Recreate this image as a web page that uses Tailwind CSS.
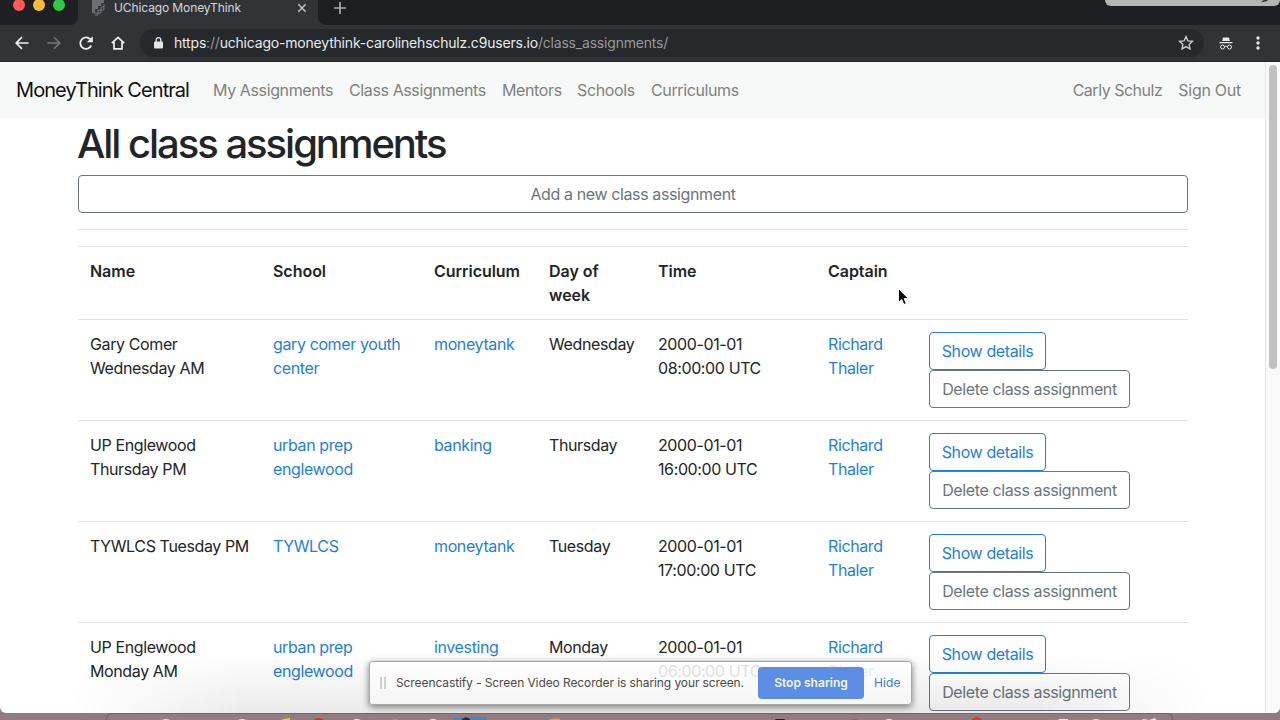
<!DOCTYPE html>
<html lang="en">
<head>
<meta charset="UTF-8">
<meta name="viewport" content="width=device-width,initial-scale=1">
<title>UChicago MoneyThink</title>
<script src="https://cdn.jsdelivr.net/npm/@tailwindcss/browser@4"></script>
</head>

<body class="relative w-[1280px] h-[720px] overflow-hidden bg-[#937a80] font-['Inter','Liberation_Sans',sans-serif] text-base text-[#212529]">

<!-- dock -->
<div class="absolute left-[106px] top-[713px] w-[1067px] h-[20px] rounded-t-md border border-b-0 border-[#75646a] bg-[#967c82]">
  <svg class="block w-[1066px] h-[8px] -mt-px" viewBox="107 713 1066 8">
    <g fill="#eee6e8">
      <circle cx="166" cy="727" r="8"/><circle cx="242" cy="727" r="8"/><circle cx="357" cy="727" r="8"/><circle cx="433" cy="727" r="8"/>
      <circle cx="889" cy="727" r="8"/><circle cx="1096" cy="727" r="8"/><path d="M1057 721l2-2h9v2zM1141 721l2-2 6 1 6-2 2 3z"/>
    </g>
    <path d="M279 721q6-3 11-3v3z" fill="#e8c947"/>
    <circle cx="319" cy="726" r="8" fill="#c23a32"/>
    <circle cx="395" cy="727" r="8" fill="#86b453"/>
    <rect x="453" y="717" width="34" height="5" rx="2" fill="#4a86b8"/>
    <path d="M462 719l4-2 4 2v2h-8z" fill="#1d3145"/>
    <path d="M546 721q8-4 14-2v2z" fill="#dba346"/>
    <path d="M773 721l3-2h9l-1 2z" fill="#222"/>
    <circle cx="855" cy="726" r="7" fill="#c64748"/>
    <circle cx="977" cy="723" r="6" fill="#d23b3a"/>
  </svg>
</div>

<!-- browser window -->
<div class="relative flex flex-col h-[713px] overflow-hidden rounded-b-md bg-white">

  <!-- tab strip -->
  <div class="flex h-[25px] shrink-0 bg-[#1e1f23]">
    <div class="w-[78px] bg-[#303437]">
      <div class="flex h-full gap-2 rounded-br-lg bg-[#1e1f23] pl-[13px]">
        <i class="size-3 -mt-px rounded-full bg-[#fc5b57]"></i>
        <i class="size-3 -mt-px rounded-full bg-[#fdbc40]"></i>
        <i class="size-3 -mt-px rounded-full bg-[#34c84a]"></i>
      </div>
    </div>
    <div class="flex w-[240px] bg-[#303437] pl-[14px]">
      <svg class="w-[13px] h-[16px]" viewBox="0 0 13 16"><path d="M0 0h12v3H9v3H6v3H3v4H0z" fill="#6d7073"/><path d="M12 4v3H9v3H6v3H2M12 7v3H9v3H6v2H3" fill="none" stroke="#7b7e81" stroke-width=".9"/></svg>
      <span class="ml-[9px] w-[170px] text-xs leading-4 tracking-[-0.009em] text-[#d4d6d8]">UChicago MoneyThink</span>
      <svg class="mt-[3px] ml-[13px] size-[10px]" viewBox="0 0 10 10"><path d="M1.300 1.300l7.400 7.400M8.700 1.300L1.300 8.700" stroke="#bfc2c4" stroke-width="1.500"/></svg>
    </div>
    <div class="w-[962px] bg-[#303437]">
      <div class="flex h-full justify-between rounded-bl-lg bg-[#1e1f23]">
        <svg class="ml-4 mt-[2px] size-3" viewBox="0 0 12 12"><path d="M6 0v12M0 6h12" stroke="#a9abae" stroke-width="1.700"/></svg>
        <div class="flex justify-end w-[175px] h-[6px] rounded-b-md bg-[#b5b5b5] pr-[11px]"><svg class="w-2 h-[3px]" viewBox="0 0 8 3"><path d="M0 2q5 0 7-2H3z" fill="#333"/></svg></div>
      </div>
    </div>
  </div>

  <!-- toolbar -->
  <div class="flex h-[37px] shrink-0 items-center border-b border-[#242629] bg-[#303437] pl-[15px]">
    <svg class="size-[14px]" viewBox="0 0 14 14" fill="none" stroke="#eef0f1" stroke-width="1.700"><path d="M13.500 7H1.500M7 1.200L1.200 7 7 12.800"/></svg>
    <svg class="ml-[18px] size-[14px]" viewBox="0 0 14 14" fill="none" stroke="#74787b" stroke-width="1.600"><path d="M.500 7h12M7 1.200L12.800 7 7 12.800"/></svg>
    <svg class="ml-[18px] size-[14px]" viewBox="0 0 14 14"><path d="M12.200 9.500A5.700 5.700 0 1 1 11.200 3.200" fill="none" stroke="#eef0f1" stroke-width="1.800"/><path d="M13.800.300v6H7.800z" fill="#eef0f1"/></svg>
    <svg class="ml-[18px] size-[14px]" viewBox="0 0 14 14" fill="none" stroke="#eef0f1" stroke-width="1.700"><path d="M.800 7.200L7 1.300l6.200 5.900M3 6v6.900h8V6"/></svg>
    <div class="flex w-[1064px] h-7 items-center ml-[15px] rounded-full bg-[#25292b] pl-[14px]">
      <svg class="w-[9px] h-[12px]" viewBox="0 0 9 12"><rect y="4.500" width="9" height="7" rx="1" fill="#e3e5e6"/><path d="M2.200 5V3a2.300 2.300 0 0 1 4.600 0v2" fill="none" stroke="#e3e5e6" stroke-width="1.300"/></svg>
      <span class="ml-[11px] w-[1008px] whitespace-nowrap text-sm tracking-[-0.014em] text-[#e8eaeb]">https<span class="text-[#969a9d]">://</span>uchicago-moneythink-carolinehschulz.c9users.io<span class="text-[#969a9d]">/class_assignments/</span></span>
      <svg class="-ml-[4px] size-4 shrink-0" viewBox="0 0 16 16"><path d="M8 1.600l1.900 4.200 4.600.500-3.400 3.100.900 4.500L8 11.600l-4 2.300.900-4.500L1.500 6.300l4.600-.500z" fill="none" stroke="#cfd2d4" stroke-width="1.300"/></svg>
    </div>
    <svg class="ml-[15px] w-[14px] h-[13px]" viewBox="0 0 14 13"><path d="M4 0.500h6l.800 3.500H3.200zM.500 5h13v1.300H.500z" fill="#e8eaeb"/><g fill="none" stroke="#e8eaeb"><circle cx="3.500" cy="10" r="2"/><circle cx="10.500" cy="10" r="2"/><path d="M5.500 9.600q1.500-1 3 0"/></g></svg>
    <svg class="ml-[23px] w-[4px] h-[14px]" viewBox="0 0 4 14" fill="#e8eaeb"><circle cx="2" cy="2" r="1.700"/><circle cx="2" cy="7" r="1.700"/><circle cx="2" cy="12" r="1.700"/></svg>
  </div>

  <div class="flex h-[651px]">
    <main class="w-[1265px]">
      <nav class="flex h-14 items-center bg-[#f7f9f8] pl-4 pr-6 text-[#7f8181] tracking-[-0.024em]">
        <a class="w-[197px] text-xl whitespace-nowrap tracking-[-0.047em] text-[#111]">MoneyThink Central</a>
        <a class="w-[136px]">My Assignments</a>
        <a class="w-[153px]">Class Assignments</a>
        <a class="w-[75px]">Mentors</a>
        <a class="w-[74px]">Schools</a>
        <a>Curriculums</a>
        <a class="ml-auto tracking-[-0.03em]">Carly Schulz</a>
        <a class="ml-4 tracking-[-0.017em]">Sign Out</a>
      </nav>

      <div class="w-[1110px] ml-[78px] tracking-[-0.024em]">
        <h1 class="-ml-px mt-[3px] mb-2 h-[46px] text-[40px] leading-[46px] font-medium tracking-[-0.051em]">All class assignments</h1>
        <button class="block w-full h-[38px] rounded border border-[#6c757d] text-[#6c757d]">Add a new class assignment</button>
        <hr class="my-4 border-[#e2e4e4]">

        <table class="w-full table-fixed border-collapse [&_th]:border-t [&_td]:border-t [&_th]:border-[#dee2e6] [&_td]:border-[#dee2e6] [&_th]:h-[73px] [&_td]:h-[101px] [&_th]:px-3 [&_td]:px-3 [&_th]:pt-3 [&_td]:pt-3 [&_th]:align-top [&_td]:align-top [&_th]:text-left [&_th]:font-semibold [&_th]:tracking-[-0.002em] [&_td]:whitespace-nowrap [&_a]:text-[#1f7fdc] [&_button]:block [&_button]:h-[38px] [&_button]:rounded [&_button]:border">
          <colgroup><col class="w-[183px]"><col class="w-[161px]"><col class="w-[115px]"><col class="w-[109px]"><col class="w-[170px]"><col class="w-[101px]"><col></colgroup>
          <thead>
            <tr><th>Name</th><th>School</th><th>Curriculum</th><th>Day of<br>week</th><th>Time</th><th>Captain</th><th></th></tr>
          </thead>
          <tbody>
            <tr>
              <td>Gary Comer<br>Wednesday AM</td><td><a>gary comer youth<br>center</a></td><td><a>moneytank</a></td><td>Wednesday</td><td>2000-01-01<br>08:00:00 UTC</td><td><a>Richard<br>Thaler</a></td>
              <td><button class="w-[117px] border-[#1f7fdc] text-[#1f7fdc]">Show details</button><button class="w-[201px] border-[#6c757d] text-[#6c757d]">Delete class assignment</button></td>
            </tr>
            <tr>
              <td>UP Englewood<br>Thursday PM</td><td><a>urban prep<br>englewood</a></td><td><a>banking</a></td><td>Thursday</td><td>2000-01-01<br>16:00:00 UTC</td><td><a>Richard<br>Thaler</a></td>
              <td><button class="w-[117px] border-[#1f7fdc] text-[#1f7fdc]">Show details</button><button class="w-[201px] border-[#6c757d] text-[#6c757d]">Delete class assignment</button></td>
            </tr>
            <tr>
              <td>TYWLCS Tuesday PM</td><td><a>TYWLCS</a></td><td><a>moneytank</a></td><td>Tuesday</td><td>2000-01-01<br>17:00:00 UTC</td><td><a>Richard<br>Thaler</a></td>
              <td><button class="w-[117px] border-[#1f7fdc] text-[#1f7fdc]">Show details</button><button class="w-[201px] border-[#6c757d] text-[#6c757d]">Delete class assignment</button></td>
            </tr>
            <tr>
              <td>UP Englewood<br>Monday AM</td><td><a>urban prep<br>englewood</a></td><td><a>investing</a></td><td>Monday</td><td>2000-01-01<br>06:00:00 UTC</td><td><a>Richard<br>Thaler</a></td>
              <td><button class="w-[117px] border-[#1f7fdc] text-[#1f7fdc]">Show details</button><button class="w-[201px] border-[#6c757d] text-[#6c757d]">Delete class assignment</button></td>
            </tr>
          </tbody>
        </table>
      </div>
    </main>
    <!-- scrollbar -->
    <div class="w-[15px] border-l border-[#e6e6e6] bg-[#fafafa] pl-[3px] pt-[3px]">
      <div class="w-2 h-[304px] rounded-full bg-[#c1c1c1]"></div>
    </div>
  </div>
  <div class="absolute left-[70px] bottom-0 w-[1140px] h-[60px] bg-linear-to-b from-transparent to-black/8 mask-x-from-85% mask-x-to-100%"></div>
</div>

<!-- screen sharing bar -->
<div class="absolute left-[369px] top-[661px] flex w-[543px] h-[44px] items-center rounded-[3px] border border-[#a9a9a9] bg-linear-to-b from-white/85 to-[#f7f7f7]/90 pl-[10px] text-xs text-[#4b4b4b] shadow-[0_2px_7px_rgba(0,0,0,0.5)]">
  <i class="h-3 w-[6px] border-x-2 border-[#cecece]"></i>
  <span class="ml-[10px] w-[362px] whitespace-nowrap tracking-[-0.008em]">Screencastify - Screen Video Recorder is sharing your screen.</span>
  <button class="w-[106px] h-8 rounded bg-[#5388e5]/95 font-semibold tracking-[0.002em] text-[#f1f6ff]">Stop sharing</button>
  <a class="ml-[10px] tracking-[0.01em] text-[#4479ce]">Hide</a>
</div>

<!-- pointer -->
<svg class="absolute left-[897px] top-[287px] w-[13px] h-[20px]" viewBox="0 0 13 20"><path d="M1.500 1.500v14l3.200-3 2.200 5 2.400-1-2.200-4.900h4.300z" fill="#050505" stroke="#fff"/></svg>
</body>
</html>
